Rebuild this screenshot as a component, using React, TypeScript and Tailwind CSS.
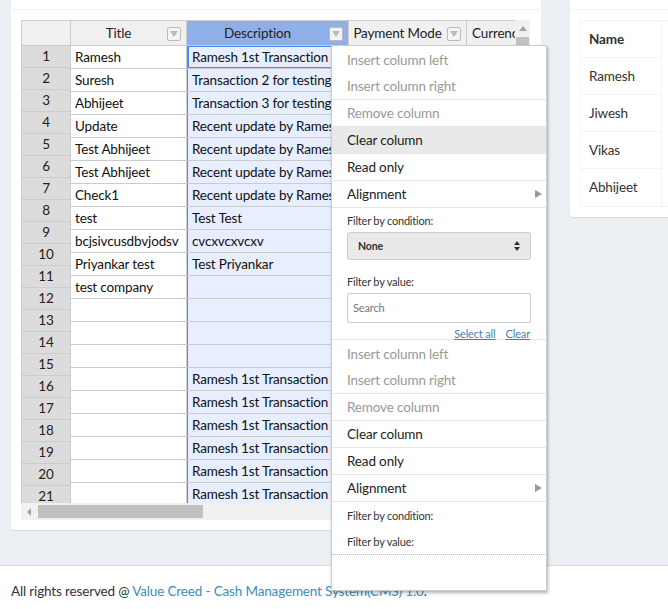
import React from 'react'

const rows: [string, string][] = [
  ['Ramesh', 'Ramesh 1st Transaction'],
  ['Suresh', 'Transaction 2 for testing'],
  ['Abhijeet', 'Transaction 3 for testing'],
  ['Update', 'Recent update by Ramesh'],
  ['Test Abhijeet', 'Recent update by Ramesh'],
  ['Test Abhijeet', 'Recent update by Ramesh'],
  ['Check1', 'Recent update by Ramesh'],
  ['test', 'Test Test'],
  ['bcjsivcusdbvjodsv', 'cvcxvcxvcxv'],
  ['Priyankar test', 'Test Priyankar'],
  ['test company', ''],
  ['', ''],
  ['', ''],
  ['', ''],
  ['', 'Ramesh 1st Transaction'],
  ['', 'Ramesh 1st Transaction'],
  ['', 'Ramesh 1st Transaction'],
  ['', 'Ramesh 1st Transaction'],
  ['', 'Ramesh 1st Transaction'],
  ['', 'Ramesh 1st Transaction'],
  ['', 'Ramesh 1st Transaction'],
]

const people = ['Ramesh', 'Jiwesh', 'Vikas', 'Abhijeet']

function FilterButton() {
  return (
    <span className="absolute right-[5px] top-[6px] w-[14px] h-[14px] border border-[#bbb] rounded-[2px] bg-[#f3f3f3] flex items-center justify-center">
      <span className="w-0 h-0 border-x-[4px] border-x-transparent border-t-[6px] border-t-[#bbb]" />
    </span>
  )
}

function HeaderCell({ label, width, active }: { label: string; width: string; active?: boolean }) {
  return (
    <div
      className={`relative h-[26px] shrink-0 border-y border-r border-[#ccc] ${width} ${
        active ? 'bg-[#8eb0e7]' : 'bg-[#f0f0f0]'
      } text-[#222] text-center leading-[24px] pr-[20px] whitespace-nowrap overflow-hidden`}
    >
      {label}
      <FilterButton />
    </div>
  )
}

function Separator() {
  return <div className="h-px bg-[#e6e6e6]" />
}

function MenuItem({ label, disabled, active, arrow }: { label: string; disabled?: boolean; active?: boolean; arrow?: boolean }) {
  return (
    <div
      className={`relative h-[26px] px-[15px] leading-[26px] ${disabled ? 'text-[#999]' : 'text-[#222]'} ${
        active ? 'bg-[#e9e9e9]' : ''
      }`}
    >
      {label}
      {arrow && (
        <span className="absolute right-[4px] top-[9px] w-0 h-0 border-y-[4px] border-y-transparent border-l-[7px] border-l-[#999]" />
      )}
    </div>
  )
}

function MenuItems({ hovered }: { hovered?: boolean }) {
  return (
    <>
      <MenuItem label="Insert column left" disabled />
      <MenuItem label="Insert column right" disabled />
      <Separator />
      <MenuItem label="Remove column" disabled />
      <Separator />
      <MenuItem label="Clear column" active={hovered} />
      <Separator />
      <MenuItem label="Read only" />
      <Separator />
      <MenuItem label="Alignment" arrow />
      <Separator />
    </>
  )
}

function ContextMenu() {
  return (
    <div className="absolute left-[331px] top-[45px] w-[216px] h-[546px] bg-white border border-[#ccc] shadow-[1px_2px_3px_rgba(0,0,0,0.3)] pt-px z-10">
      <MenuItems hovered />
      <div className="px-[15px]">
        <div className="h-[24px] leading-[26px] text-[11px] text-[#333] tracking-[-0.2px]">Filter by condition:</div>
        <div className="relative h-[28px] bg-[#e9e9e9] border border-[#ccc] rounded-[3px] px-[10px] leading-[26px] text-[10.5px] font-bold text-[#333]">
          None
          <span className="absolute right-[10px] top-[8px] flex flex-col gap-[2px]">
            <span className="w-0 h-0 border-x-[3px] border-x-transparent border-b-[4px] border-b-[#333]" />
            <span className="w-0 h-0 border-x-[3px] border-x-transparent border-t-[4px] border-t-[#333]" />
          </span>
        </div>
        <div className="pt-[14px] mb-[3px] leading-[16px] text-[11px] text-[#333] tracking-[-0.2px]">Filter by value:</div>
        <div className="h-[30px] border border-[#ccc] rounded-[2px] px-[5px] leading-[28px] text-[11px] text-[#777]">Search</div>
        <div className="flex justify-end gap-[10px] pt-[5px] pr-px h-[16px] leading-[12px] text-[11px] text-[#3c7fc1]">
          <span className="underline">Select all</span>
          <span className="underline">Clear</span>
        </div>
      </div>
      <Separator />
      <div className="pt-px">
        <MenuItems />
      </div>
      <div className="px-[15px] text-[11px] text-[#333] tracking-[-0.2px]">
        <div className="h-[28px] leading-[28px]">Filter by condition:</div>
        <div className="h-[24px] leading-[24px]">Filter by value:</div>
      </div>
      <div className="border-t border-dotted border-[#bbb]" />
    </div>
  )
}

function DataTable() {
  return (
    <div className="relative w-[509px] h-[500px]">
      <div className="h-[483px] overflow-hidden flex">
        <div className="w-[50px] shrink-0">
          <div className="h-[26px] border border-[#ccc] bg-[#f0f0f0]" />
          {rows.map((_, i) => (
            <div key={i} className="h-[22px] border-x border-b border-[#ccc] bg-[#dcdcdc] text-center leading-[21px] text-[#222]">
              {i + 1}
            </div>
          ))}
        </div>
        <div className="w-[116px] shrink-0">
          <HeaderCell label="Title" width="w-[116px]" />
          {rows.map(([t], i) => (
            <div key={i} className="h-[23px] border-r border-b border-[#ccc] bg-white px-[4px] leading-[22px] text-[#111] whitespace-nowrap overflow-hidden">
              {t}
            </div>
          ))}
        </div>
        <div className="w-[162px] shrink-0">
          <HeaderCell label="Description" width="w-[162px]" active />
          {rows.map(([, d], i) => (
            <div
              key={i}
              className="relative h-[23px] border-r border-b border-[#ccc] bg-[#e6eeff] shadow-[inset_1px_0_0_#4b89ff] px-[5px] leading-[22px] text-[#111] whitespace-nowrap overflow-hidden"
            >
              {d}
              {i === 0 && <span className="absolute left-0 top-[-1px] right-0 bottom-[-1px] border-2 border-[#4b89ff]" />}
            </div>
          ))}
        </div>
        <div className="w-[118px] shrink-0">
          <HeaderCell label="Payment Mode" width="w-[118px]" />
          {rows.map((_, i) => (
            <div key={i} className="h-[23px] border-r border-b border-[#ccc] bg-white" />
          ))}
        </div>
        <div className="w-[120px] shrink-0">
          <div className="h-[26px] border-y border-r border-[#ccc] bg-[#f0f0f0] text-[#222] leading-[24px] px-[5px]">Currency</div>
          {rows.map((_, i) => (
            <div key={i} className="h-[23px] border-r border-b border-[#ccc] bg-white" />
          ))}
        </div>
      </div>
      {/* vertical scrollbar */}
      <div className="absolute right-0 top-0 w-[15px] h-[483px] bg-[#f1f1f1]">
        <span className="block mx-auto mt-[6px] w-0 h-0 border-x-[4px] border-x-transparent border-b-[5px] border-b-[#a3a3a3]" />
        <div className="mt-[6px] mx-px h-[200px] bg-[#c1c1c1]" />
      </div>
      {/* horizontal scrollbar */}
      <div className="flex items-center h-[17px] bg-[#f1f1f1]">
        <span className="ml-[6px] w-0 h-0 border-y-[4px] border-y-transparent border-r-[4px] border-r-[#a3a3a3]" />
        <div className="ml-[7px] w-[165px] h-[13px] bg-[#c1c1c1]" />
      </div>
    </div>
  )
}

export default function App() {
  return (
    <div className="relative w-[668px] h-[609px] overflow-hidden bg-[#ecf0f5] font-['Lato',sans-serif] text-[13.5px] tracking-[-0.15px] text-[#333]">
      <div className="flex items-start h-[565px] pl-[11px]">
        <div className="w-[530px] shrink-0 bg-white rounded-b-[3px] shadow-[0_1px_1px_rgba(0,0,0,0.1)]">
          <div className="h-[10px] border-b border-[#f4f4f4]" />
          <div className="p-[10px]">
            <DataTable />
          </div>
        </div>
        <div className="ml-[29px] w-[120px] shrink-0 bg-white rounded-b-[3px] shadow-[0_1px_1px_rgba(0,0,0,0.1)]">
          <div className="h-[10px] border-b border-[#f4f4f4]" />
          <div className="p-[10px]">
            <div className="flex border border-[#f4f4f4]">
              <div className="w-[81px] shrink-0 border-r border-[#f4f4f4]">
                <div className="h-[37px] px-[8px] leading-[36px] font-bold border-b border-[#f4f4f4]">Name</div>
                {people.map((p, i) => (
                  <div key={p} className={`h-[37px] px-[8px] leading-[36px] ${i < people.length - 1 ? 'border-b border-[#f4f4f4]' : ''}`}>
                    {p}
                  </div>
                ))}
              </div>
              <div className="flex-1" />
            </div>
          </div>
        </div>
      </div>
      <footer className="h-[44px] bg-white border-t border-[#d2d6de] px-[11px] pt-[15px] leading-[20px] text-[#333]">
        All rights reserved @ <span className="text-[#3c8dbc]">Value Creed - Cash Management System(CMS) 1.0</span>.
      </footer>
      <ContextMenu />
    </div>
  )
}
